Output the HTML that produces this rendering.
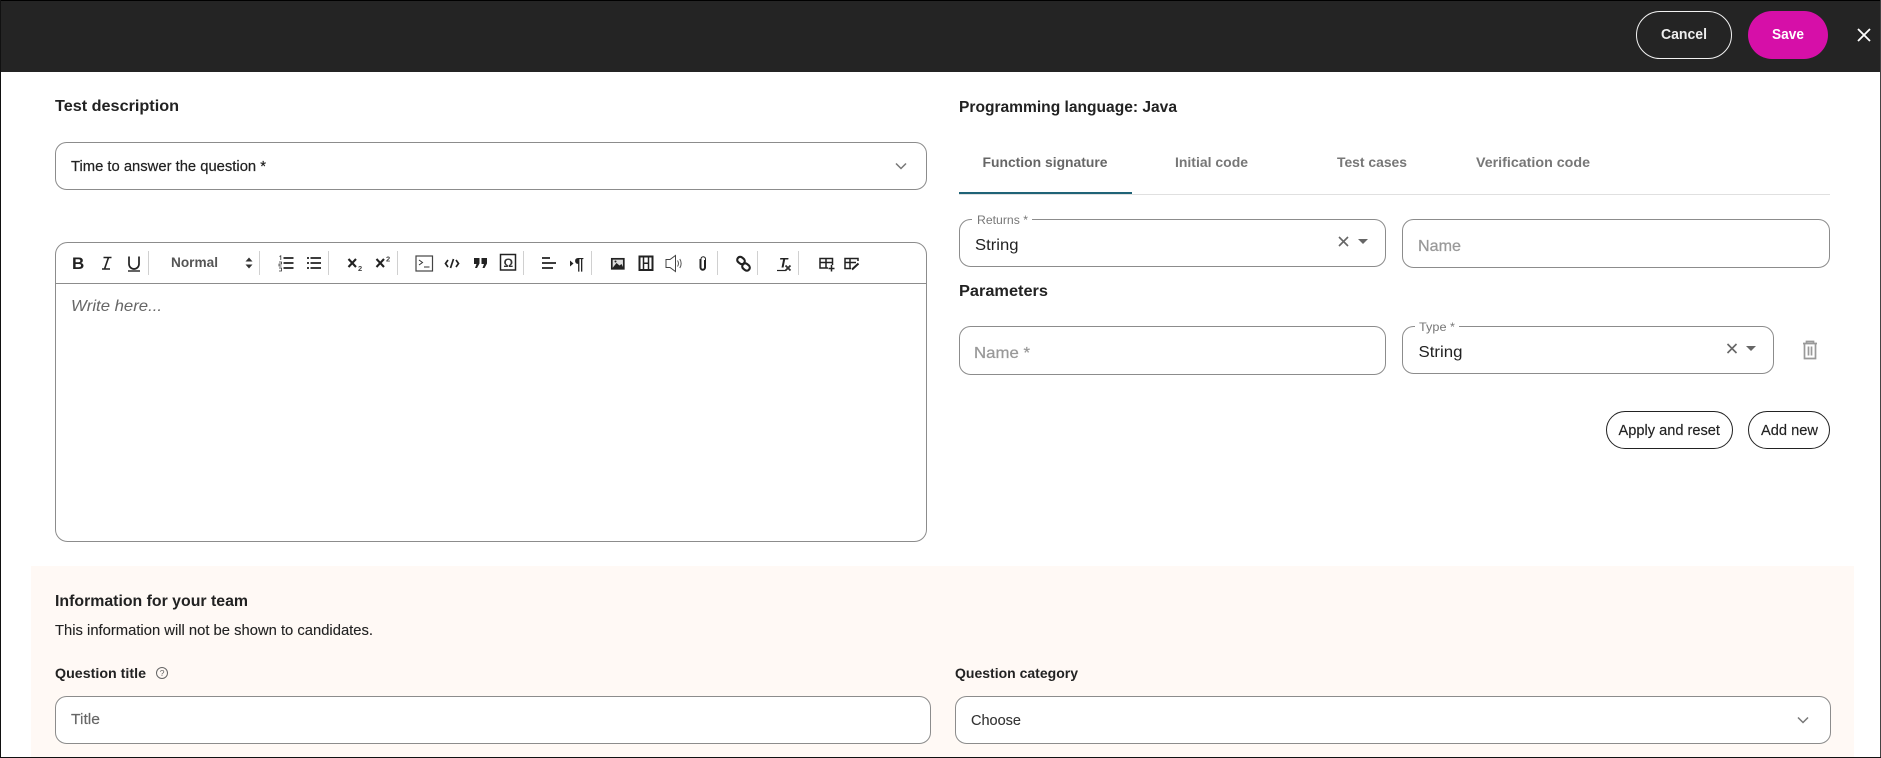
<!DOCTYPE html>
<html lang="en"><head><meta charset="utf-8"><title>Question editor</title>
<style>
html,body{margin:0;padding:0;width:1881px;height:758px;overflow:hidden;background:#fff}
svg{display:block}
text{font-family:"Liberation Sans",sans-serif;white-space:pre}
.h{font-weight:700;font-size:16px;fill:#222}
.m{font-size:15px;fill:#222;stroke:#222;stroke-width:.2px}
.tab{font-weight:700;font-size:14px;fill:#777}
.lb{font-size:12px;fill:#777}
.ph{font-size:16px;fill:#999;stroke:#999;stroke-width:.25px}
.box{fill:#fff;stroke:#8c8c8c;stroke-width:1}
.sep{stroke:#d0d0d0;stroke-width:1}
</style></head><body>
<svg width="1881" height="758" viewBox="0 0 1881 758" xmlns="http://www.w3.org/2000/svg">
<!-- header -->
<rect x="0" y="0" width="1881" height="72" fill="#242424"/>
<rect x="0" y="0" width="1881" height="1" fill="#000"/>
<rect x="1636.500" y="11.500" width="95" height="47" rx="23.500" fill="none" stroke="#f2f2f2" stroke-width="1"/>
<text x="1661" y="39" font-size="14.500" font-weight="700" fill="#eee" textLength="46" lengthAdjust="spacingAndGlyphs">Cancel</text>
<rect x="1748" y="11" width="80" height="48" rx="24" fill="#d60fa8"/>
<text x="1772" y="39" font-size="14.500" font-weight="700" fill="#fff" textLength="32" lengthAdjust="spacingAndGlyphs">Save</text>
<path d="M1858 29 L1870 41 M1870 29 L1858 41" stroke="#fff" stroke-width="1.800" fill="none"/>

<!-- left column -->
<text class="h" x="55" y="111" textLength="124" lengthAdjust="spacingAndGlyphs">Test description</text>
<rect class="box" x="55.500" y="142.500" width="871" height="47" rx="11"/>
<text class="m" x="71" y="171" textLength="195" lengthAdjust="spacingAndGlyphs">Time to answer the question *</text>
<path d="M896 163.500 L901 168.500 L906 163.500" fill="none" stroke="#777" stroke-width="1.500"/>

<!-- editor -->
<rect class="box" x="55.500" y="242.500" width="871" height="299" rx="12"/>
<line x1="55" y1="283.500" x2="927" y2="283.500" stroke="#8c8c8c"/>
<text x="72" y="269" font-size="17" font-weight="700" fill="#222">B</text>
<path d="M103.500 257.500H111.500M102 269H110M108.500 257.500L104.500 269" fill="none" stroke="#222" stroke-width="1.600"/>
<path d="M129 256.500V264a5 5 0 0 0 10 0V256.500" fill="none" stroke="#222" stroke-width="1.700"/>
<line x1="128" y1="271" x2="140" y2="271" stroke="#222" stroke-width="1.400"/>
<line class="sep" x1="148.500" y1="251" x2="148.500" y2="275"/>
<text x="171" y="267" font-size="13.500" font-weight="700" fill="#555" textLength="47" lengthAdjust="spacingAndGlyphs">Normal</text>
<path d="M245.500 261.500L249 257.500L252.500 261.500Z M245.500 264.500L249 268.500L252.500 264.500Z" fill="#333"/>
<line class="sep" x1="259.500" y1="251" x2="259.500" y2="275"/>
<path d="M283.500 258H293.500M283.500 263H293.500M283.500 268H293.500" stroke="#222" stroke-width="1.800" fill="none"/>
<path d="M279.500 256.500L280.800 255.800V260M279 262H281.500V264H279V266H281.500M279 268H281.500V271H279" stroke="#333" stroke-width=".8" fill="none"/>
<path d="M307 258H309M307 263H309M307 268H309M310.500 258H321M310.500 263H321M310.500 268H321" stroke="#222" stroke-width="1.800" fill="none"/>
<line class="sep" x1="328.500" y1="251" x2="328.500" y2="275"/>
<path d="M348.500 259L356 267M356 259L348.500 267M376.500 259L384 267M384 259L376.500 267" stroke="#222" stroke-width="2.100" fill="none"/>
<text x="358" y="271" font-size="7.500" font-weight="700" fill="#444">2</text>
<text x="386" y="261.500" font-size="7.500" font-weight="700" fill="#444">2</text>
<line class="sep" x1="397.500" y1="251" x2="397.500" y2="275"/>
<rect x="416" y="256" width="16.500" height="15" fill="none" stroke="#444" stroke-width="1.200"/>
<path d="M419 260L422.500 262.500L419 265M424 267H429.500" fill="none" stroke="#333" stroke-width="1"/>
<path d="M448 260L445.500 263.500L448 267M456 260L458.500 263.500L456 267M453.500 259L450.500 268" fill="none" stroke="#222" stroke-width="1.700"/>
<path d="M474 258h5.500v5.500l-2.500 4.500h-2l1.500-4H474Z M481.500 258h5.500v5.500l-2.500 4.500h-2l1.500-4H481.500Z" fill="#222"/>
<rect x="500.500" y="254.500" width="15" height="15.500" fill="none" stroke="#222" stroke-width="1.500"/>
<text x="503.500" y="267" font-size="12" font-weight="700" fill="#333">Ω</text>
<line class="sep" x1="523.500" y1="251" x2="523.500" y2="275"/>
<path d="M542 258H550M542 263H556M542 268H553" stroke="#222" stroke-width="1.800" fill="none"/>
<path d="M570 260.500L573.500 263.500L570 266.500Z" fill="#222"/>
<text x="574.500" y="269.500" font-size="17" font-weight="700" fill="#222">¶</text>
<line class="sep" x1="591.500" y1="251" x2="591.500" y2="275"/>
<rect x="611.800" y="258.800" width="12" height="10" fill="#ddd" stroke="#222" stroke-width="1.700"/>
<path d="M612.500 268L616.500 263L619.500 265.500L621.500 264L623.500 268Z" fill="#222"/><circle cx="615.500" cy="261.500" r="1" fill="#222"/>
<rect x="639.500" y="256.500" width="13" height="13.500" fill="#fff" stroke="#222" stroke-width="2"/>
<path d="M643.500 256V270M648.500 256V270M643 263.200H649" stroke="#222" stroke-width="1.500" fill="none"/>
<path d="M666 259.500H670L675.500 255.500V271.500L670 267.500H666Z" fill="none" stroke="#444" stroke-width="1"/>
<path d="M677.500 260.500Q679.500 263.500 677.500 266.500M679.800 259Q682.500 263.500 679.800 268" fill="none" stroke="#555" stroke-width="1"/>
<path d="M704.500 260V267.500a1.700 1.700 0 0 1-3.500 0V259a2.200 2.200 0 0 1 4.500 0V267.500a2.700 2.700 0 0 1-5.500 0V259" fill="none" stroke="#222" stroke-width="1"/>
<line class="sep" x1="717.500" y1="251" x2="717.500" y2="275"/>
<rect x="737" y="257.500" width="8" height="6" rx="3" transform="rotate(40 741 260.500)" fill="none" stroke="#222" stroke-width="2.200"/>
<rect x="742" y="264" width="8" height="6" rx="3" transform="rotate(40 746 267)" fill="none" stroke="#222" stroke-width="2.200"/>
<line class="sep" x1="757.500" y1="251" x2="757.500" y2="275"/>
<text x="779" y="267.500" font-size="14" font-style="italic" font-weight="700" fill="#222">T</text>
<line x1="777" y1="270.500" x2="786" y2="270.500" stroke="#222" stroke-width="1.200"/>
<path d="M785.500 265.500L790.500 270.500M790.500 265.500L785.500 270.500" stroke="#333" stroke-width="1.800" fill="none"/>
<line class="sep" x1="798.500" y1="251" x2="798.500" y2="275"/>
<path d="M828 268H820V258.500H832.500V265M820 262.500H832.500M826 258.500V268" fill="none" stroke="#222" stroke-width="1.500"/>
<path d="M831.500 265V271.500M828.500 268.500H834.500" stroke="#222" stroke-width="1.500"/>
<path d="M851 268.500H845V258.500H858V261M845 262.500H856M850 258.500V268.500" fill="none" stroke="#222" stroke-width="1.500"/>
<path d="M852 269.500L858.500 263.500" stroke="#222" stroke-width="2"/>
<text x="71" y="311" font-size="16" font-style="italic" fill="#666" textLength="91" lengthAdjust="spacingAndGlyphs">Write here...</text>

<!-- right column -->
<text class="h" x="959" y="112" textLength="218" lengthAdjust="spacingAndGlyphs">Programming language: Java</text>
<line x1="959" y1="194.500" x2="1830" y2="194.500" stroke="#e0e0e0"/>
<rect x="959" y="192" width="173" height="2" fill="#1f6377"/>
<text class="tab" x="982.500" y="167" textLength="125" lengthAdjust="spacingAndGlyphs" style="fill:#666">Function signature</text>
<text class="tab" x="1175" y="167" textLength="73" lengthAdjust="spacingAndGlyphs">Initial code</text>
<text class="tab" x="1337" y="167" textLength="70" lengthAdjust="spacingAndGlyphs">Test cases</text>
<text class="tab" x="1476" y="167" textLength="114" lengthAdjust="spacingAndGlyphs">Verification code</text>

<rect class="box" x="959.500" y="219.500" width="426" height="47" rx="11"/>
<rect x="972" y="216" width="60" height="6" fill="#fff"/>
<text class="lb" x="977" y="224" textLength="51" lengthAdjust="spacingAndGlyphs">Returns *</text>
<text x="975" y="250" font-size="16" fill="#222" textLength="43.500" lengthAdjust="spacingAndGlyphs">String</text>
<path d="M1339 237L1348 246M1348 237L1339 246" stroke="#666" stroke-width="1.600" fill="none"/>
<path d="M1358 239H1368L1363 244Z" fill="#666"/>

<rect class="box" x="1402.500" y="219.500" width="427" height="48" rx="11"/>
<text class="ph" x="1418" y="251" textLength="43" lengthAdjust="spacingAndGlyphs">Name</text>

<text class="h" x="959" y="296" textLength="89" lengthAdjust="spacingAndGlyphs">Parameters</text>

<rect class="box" x="959.500" y="326.500" width="426" height="48" rx="11"/>
<text class="ph" x="974" y="358" textLength="56" lengthAdjust="spacingAndGlyphs">Name *</text>

<rect class="box" x="1402.500" y="326.500" width="371" height="47" rx="11"/>
<rect x="1415" y="323" width="44" height="6" fill="#fff"/>
<text class="lb" x="1419" y="331" textLength="36" lengthAdjust="spacingAndGlyphs">Type *</text>
<text x="1418.500" y="357" font-size="16" fill="#222" textLength="44" lengthAdjust="spacingAndGlyphs">String</text>
<path d="M1727.500 344L1736.500 353M1736.500 344L1727.500 353" stroke="#666" stroke-width="1.600" fill="none"/>
<path d="M1746 346H1756L1751 351Z" fill="#666"/>
<path d="M1804.500 344V358.500H1815.500V344M1803 343.500H1817M1806.500 343V341.500H1813.500V343M1808.500 346.500V355.500M1811.500 346.500V355.500" fill="none" stroke="#999" stroke-width="1.700"/>

<rect x="1606.500" y="411.500" width="126" height="37" rx="18.500" fill="#fff" stroke="#222"/>
<text x="1618.500" y="435" font-size="14.500" fill="#222" stroke="#222" stroke-width=".15" textLength="101.500" lengthAdjust="spacingAndGlyphs">Apply and reset</text>
<rect x="1748.500" y="411.500" width="81" height="37" rx="18.500" fill="#fff" stroke="#222"/>
<text x="1761" y="435" font-size="14.500" fill="#222" stroke="#222" stroke-width=".15" textLength="57" lengthAdjust="spacingAndGlyphs">Add new</text>

<!-- team info -->
<rect x="31" y="566" width="1823" height="192" fill="#fff9f5"/>
<text class="h" x="55" y="606" textLength="193" lengthAdjust="spacingAndGlyphs">Information for your team</text>
<text x="55" y="635" font-size="14.500" fill="#222" stroke="#222" stroke-width=".1" textLength="318" lengthAdjust="spacingAndGlyphs">This information will not be shown to candidates.</text>
<text x="55" y="678" font-size="14" font-weight="700" fill="#222" textLength="91" lengthAdjust="spacingAndGlyphs">Question title</text>
<circle cx="162" cy="673" r="5.500" fill="none" stroke="#666" stroke-width="1"/>
<text x="159.700" y="676.200" font-size="8.500" fill="#666">?</text>
<text x="955" y="678" font-size="14" font-weight="700" fill="#222" textLength="123" lengthAdjust="spacingAndGlyphs">Question category</text>
<rect class="box" x="55.500" y="696.500" width="875" height="47" rx="11"/>
<text x="71" y="724" font-size="14.500" fill="#666" stroke="#666" stroke-width=".15" textLength="29" lengthAdjust="spacingAndGlyphs">Title</text>
<rect class="box" x="955.500" y="696.500" width="875" height="47" rx="11"/>
<text x="971" y="725" font-size="14.500" fill="#333" stroke="#333" stroke-width=".1" textLength="50" lengthAdjust="spacingAndGlyphs">Choose</text>
<path d="M1798 717.500L1803 722.500L1808 717.500" fill="none" stroke="#777" stroke-width="1.500"/>

<!-- frame -->
<rect x="0" y="0" width="1" height="758" fill="#111"/>
<rect x="1880" y="0" width="1" height="758" fill="#444"/>
<rect x="0" y="757" width="1881" height="1" fill="#111"/>
</svg>
</body></html>
